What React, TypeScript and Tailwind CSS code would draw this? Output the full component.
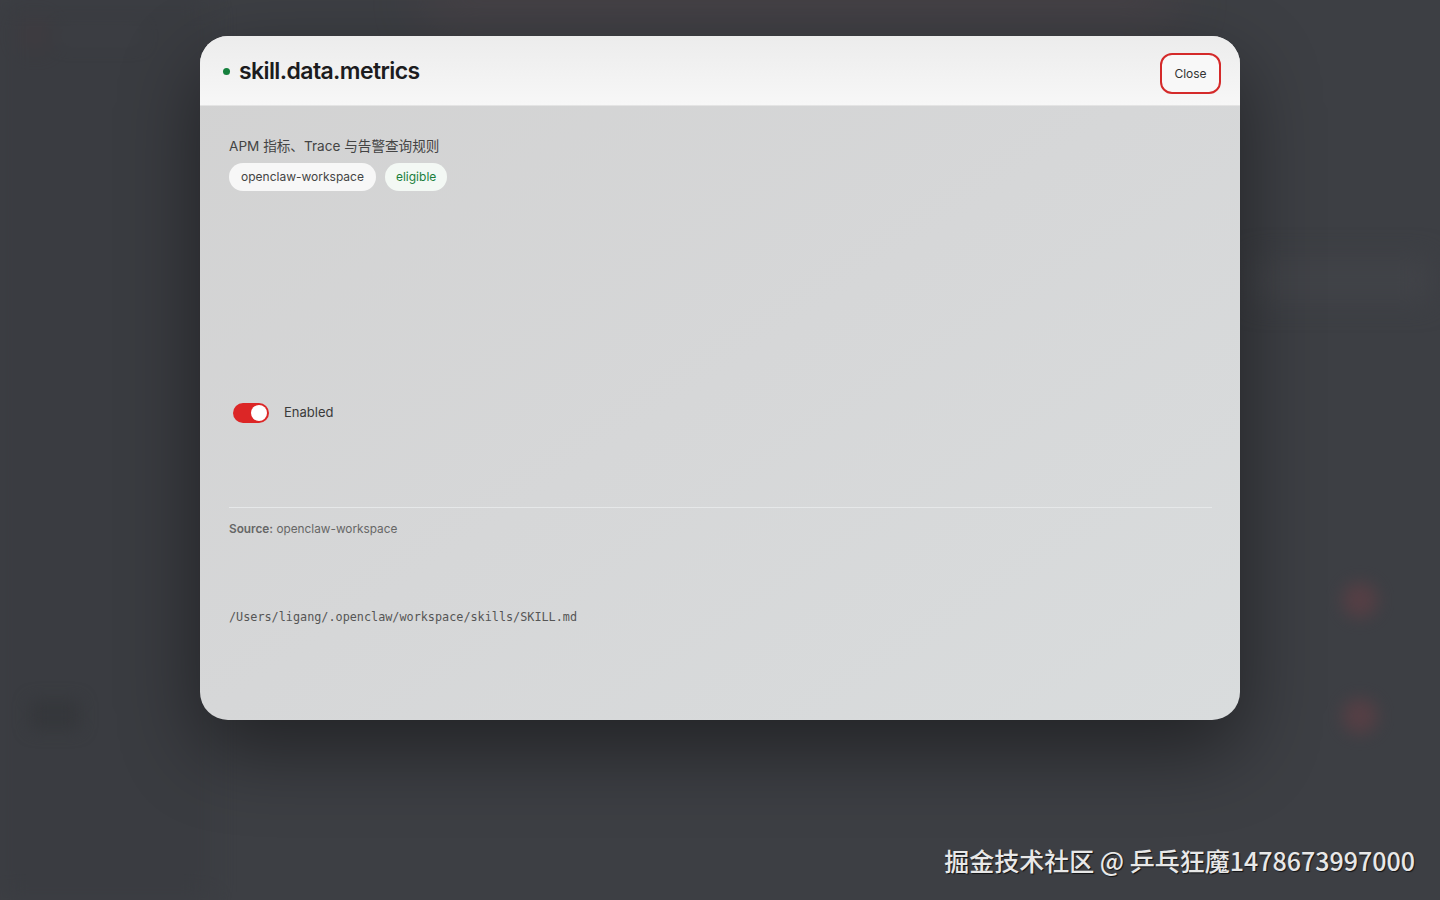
import React from "react";

export default function App() {
  return (
    <div
      className="relative w-[1440px] h-[900px] overflow-hidden bg-[#3d3f44]"
      style={{ fontFamily: "Inter, 'Noto Sans CJK SC', sans-serif" }}
    >
      {/* blurred backdrop app hints */}
      <div className="absolute inset-0 pointer-events-none">
        <div className="absolute left-[20px] top-[20px] w-[30px] h-[30px] rounded-full bg-[#5a3a3e] blur-[10px] opacity-60" />
        <div className="absolute left-[60px] top-[28px] w-[80px] h-[16px] rounded bg-[#46484d] blur-[8px]" />
        <div className="absolute left-[420px] top-[-20px] w-[760px] h-[40px] rounded-full bg-[#54464a] blur-[24px] opacity-50" />
        <div className="absolute left-[0px] top-[0px] w-[210px] h-[900px] bg-[#393b40] blur-[12px] opacity-70" />
        <div className="absolute left-[1342px] top-[582px] w-[36px] h-[36px] rounded-full bg-[#5a3f45] blur-[8px] opacity-80" />
        <div className="absolute left-[1342px] top-[698px] w-[36px] h-[36px] rounded-full bg-[#5a3f45] blur-[8px] opacity-80" />
        <div className="absolute left-[30px] top-[700px] w-[50px] h-[30px] rounded bg-[#35373b] blur-[8px]" />
        <div className="absolute left-[1250px] top-[260px] w-[180px] h-[40px] rounded bg-[#414348] blur-[14px]" />
      </div>

      {/* modal */}
      <div className="relative pt-[36px] flex justify-center">
        <div className="w-[1040px] h-[684px] rounded-[28px] overflow-hidden flex flex-col shadow-[0_30px_80px_rgba(0,0,0,0.45)] bg-gradient-to-br from-[#d2d2d2] via-[#d6d7d8] to-[#d9dcdd]">
          {/* header */}
          <div className="h-[70px] shrink-0 flex items-center justify-between pl-[23px] pr-[19px] bg-gradient-to-b from-[#ececec] to-[#f7f7f7] border-b border-[#e4e4e4]">
            <div className="flex items-center gap-[9px] mt-[1px]">
              <span className="w-[7px] h-[7px] rounded-full bg-[#15803d]" />
              <span className="text-[23px] font-semibold tracking-[-0.6px] text-[#1c1c1e] leading-none">
                skill.data.metrics
              </span>
            </div>
            <button className="mt-[6px] w-[61px] h-[41px] rounded-[12px] border-2 border-[#d42a2a] bg-[#f8f8f8] text-[12px] text-[#333] flex items-center justify-center">
              Close
            </button>
          </div>

          {/* body */}
          <div className="flex-1 flex flex-col px-[29px] pr-[28px]">
            <div className="pt-[30px] text-[13.6px] text-[#444] leading-[20px]">
              APM 指标、Trace 与告警查询规则
            </div>
            <div className="mt-[7px] flex gap-[9px]">
              <span className="h-[28px] px-[12px] rounded-full bg-[#f7f7f7] text-[12px] text-[#444] flex items-center">
                openclaw-workspace
              </span>
              <span className="h-[28px] px-[11px] rounded-full bg-[#f3f8f4] text-[12px] text-[#1a7f3b] flex items-center">
                eligible
              </span>
            </div>

            <div className="mt-[212px] flex items-center gap-[15px] pl-[4px]">
              <div className="w-[36px] h-[20px] rounded-full bg-[#dc2626] relative">
                <div className="absolute right-[2px] top-[2px] w-[16px] h-[16px] rounded-full bg-white" />
              </div>
              <span className="text-[13px] text-[#3a3a3a]">Enabled</span>
            </div>

            <div className="mt-[84px] h-px bg-[#e6e8e9]" />

            <div className="mt-[13px] text-[11.8px] text-[#666] leading-[16px]">
              <span className="font-semibold">Source:</span> openclaw-workspace
            </div>

            <div
              className="mt-[72px] text-[11.8px] text-[#555] leading-[16px]"
              style={{ fontFamily: "'DejaVu Sans Mono', monospace" }}
            >
              /Users/ligang/.openclaw/workspace/skills/SKILL.md
            </div>
          </div>
        </div>
      </div>

      {/* watermark */}
      <div className="absolute right-[25px] top-[843px] text-[25px] font-medium text-[#e8e8e8] leading-[34px] [text-shadow:1px_1px_1px_rgba(0,0,0,0.7)]"
        style={{ fontFamily: "'Noto Sans CJK SC', 'Noto Sans', sans-serif" }}>
        掘金技术社区 @ 乒乓狂魔1478673997000
      </div>
    </div>
  );
}
